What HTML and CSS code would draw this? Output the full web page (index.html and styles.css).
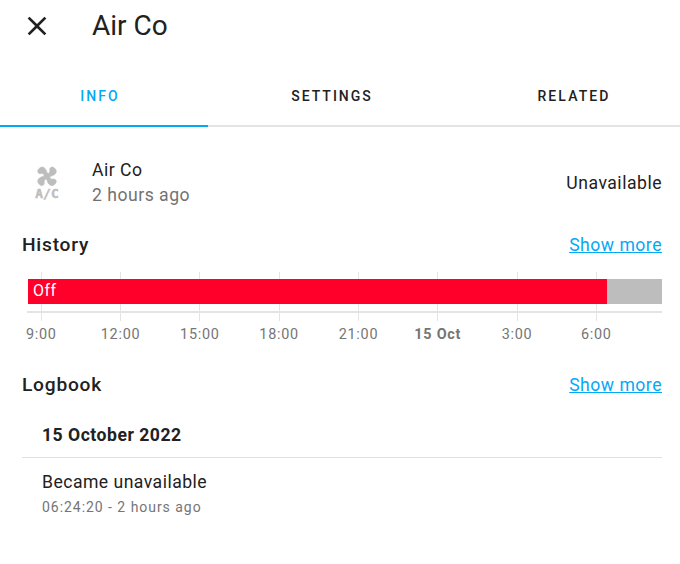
FILE: index.html
```html
<!DOCTYPE html>
<html lang="en">
<head>
	<meta charset="UTF-8">
	<title>Air Co</title>
	<link rel="stylesheet" href="styles.css">
</head>
<body>
	<header class="top-bar">
		<button class="close-btn" aria-label="Close">
			<svg viewBox="0 0 24 24" width="32" height="32"><path d="M19,6.41L17.59,5L12,10.59L6.41,5L5,6.41L10.59,12L5,17.59L6.41,19L12,13.41L17.59,19L19,17.59L13.41,12L19,6.41Z"/></svg>
		</button>
		<h1 class="title">Air Co</h1>
	</header>
	<nav class="tabs">
		<div class="tab tab-info">INFO</div>
		<div class="tab tab-settings">SETTINGS</div>
		<div class="tab tab-related">RELATED</div>
	</nav>
	<section class="entity">
		<div class="entity-icon">
			<svg viewBox="0 0 24 24" width="32" height="32"><path class="icon-fan" d="M6.59,0.66C8.93,-1.15 11.47,1.06 12.04,4.5C12.47,4.5 12.89,4.62 13.27,4.84C13.79,4.24 14.25,3.42 14.07,2.5C13.65,0.35 16.06,-1.39 18.35,1.58C20.16,3.92 17.95,6.46 14.5,7.03C14.5,7.46 14.39,7.89 14.16,8.27C14.76,8.78 15.58,9.24 16.5,9.06C18.63,8.64 20.38,11.04 17.41,13.34C15.07,15.15 12.53,12.94 11.96,9.5C11.53,9.5 11.11,9.37 10.74,9.15C10.22,9.75 9.75,10.58 9.93,11.5C10.35,13.64 7.94,15.39 5.65,12.42C3.83,10.07 6.05,7.53 9.5,6.97C9.5,6.54 9.63,6.12 9.85,5.74C9.25,5.23 8.43,4.76 7.5,4.94C5.37,5.36 3.62,2.96 6.59,0.66Z"/><text class="icon-text" x="12" y="23.2" text-anchor="middle">A/C</text></svg>
		</div>
		<div class="entity-info">
			<div class="entity-name">Air Co</div>
			<div class="entity-time">2 hours ago</div>
		</div>
		<div class="entity-state">Unavailable</div>
	</section>
	<section class="section-head history-head">
		<h2>History</h2>
		<a href="#">Show more</a>
	</section>
	<section class="chart">
		<div class="chart-ticks">
			<span></span><span></span><span></span><span></span><span></span><span></span><span></span><span></span>
		</div>
		<div class="chart-bar">
			<div class="bar-off">Off</div>
			<div class="bar-unavailable"></div>
		</div>
		<div class="chart-axis"></div>
		<div class="chart-labels">
			<span>9:00</span><span>12:00</span><span>15:00</span><span>18:00</span><span>21:00</span><span class="major">15 Oct</span><span>3:00</span><span>6:00</span>
		</div>
	</section>
	<section class="section-head logbook-head">
		<h2>Logbook</h2>
		<a href="#">Show more</a>
	</section>
	<section class="logbook">
		<div class="log-date">15 October 2022</div>
		<div class="log-entry">
			<div class="log-msg">Became unavailable</div>
			<div class="log-time">06:24:20 - 2 hours ago</div>
		</div>
	</section>
</body>
</html>
```

FILE: styles.css
```css
*{padding: 0;margin: 0;}
*,*:after,*:before{box-sizing:border-box;}
html,body{height: 100%;width: 100%;}
body{
	background: #fff;
	color: #212121;
	font-family: Roboto, "Liberation Sans", sans-serif;
	overflow: hidden;
}
.top-bar{
	display: flex;
	align-items: center;
	height: 52px;
	padding-left: 21px;
}
.close-btn{
	display: flex;
	width: 32px;
	height: 32px;
	border: 0;
	background: none;
	margin-right: 39px;
}
.close-btn svg{fill: #212121;}
.title{
	font-size: 28px;
	font-weight: 400;
	line-height: 32px;
}
.tabs{
	display: flex;
	height: 75px;
	border-bottom: 2px solid #e4e4e4;
}
.tab{
	display: flex;
	align-items: center;
	justify-content: center;
	height: 75px;
	font-size: 14px;
	font-weight: 500;
	letter-spacing: 2px;
	padding-top: 13px;
}
.tab-info{
	width: 208px;
	padding-right: 8px;
	padding-top: 15px;
	color: #03a9f4;
	border-bottom: 2px solid #03a9f4;
}
.tab-settings{width: 248px;}
.tab-related{width: 224px;padding-left: 12px;letter-spacing: 2.1px;}
.entity{
	display: flex;
	align-items: center;
	height: 62px;
	margin-top: 25px;
	padding: 0 18px 0 31px;
	font-size: 17.6px;
	letter-spacing: 0.5px;
}
.entity-icon{
	display: flex;
	width: 32px;
	height: 32px;
	margin-right: 29px;
}
.entity-icon svg{fill: #bdbdbd;overflow: visible;}
.icon-fan{
	stroke: #bdbdbd;
	stroke-width: 0.4;
}
.icon-text{
	font-family: "DejaVu Sans Mono", monospace;
	font-size: 9.6px;
	font-weight: 700;
	letter-spacing: 0.1px;
	stroke: #bdbdbd;
	stroke-width: 0.35;
}
.entity-info{flex: 1;}
.entity-name{line-height: 24px;}
.entity-time{
	line-height: 26px;
	color: #727272;
}
.section-head{
	display: flex;
	justify-content: space-between;
	align-items: center;
	padding: 0 18px 0 22px;
	height: 28px;
}
.section-head h2{
	font-size: 19.2px;
	font-weight: 500;
	letter-spacing: 0.75px;
}
.section-head a{
	font-size: 17.6px;
	letter-spacing: 0.5px;
	padding-top: 2px;
	color: #03a9f4;
}
.history-head{margin-top: 16px;}
.chart{
	position: relative;
	height: 90px;
	margin-top: 14px;
	padding: 7px 18px 0 28px;
}
.chart-bar{
	display: flex;
	height: 25px;
	position: relative;
}
.bar-off{
	width: 579px;
	background: #ff002b;
	color: #fff;
	font-size: 16px;
	letter-spacing: 0.5px;
	line-height: 24px;
	padding-left: 5px;
}
.bar-unavailable{
	flex: 1;
	background: #bdbdbd;
}
.chart-axis{
	height: 2px;
	margin: 7px 0 0 -1px;
	background: #e4e4e4;
}
/* gridlines run behind the bar */
.chart-ticks{
	position: absolute;
	top: 0;
	left: 1.6px;
	display: flex;
	height: 49px;
}
.chart-ticks span{
	width: 79.3px;
	background: linear-gradient(#e4e4e4,#e4e4e4) center/1px 100% no-repeat;
}
.chart-labels{
	display: flex;
	margin: 14px 0 0 -26.4px;
	font-size: 14.4px;
	letter-spacing: 0.75px;
	line-height: 16px;
	color: #757575;
}
.chart-labels span{
	width: 79.3px;
	text-align: center;
}
.chart-labels .major{font-weight: 700;}
.logbook-head{margin-top: 8px;}
.logbook{padding: 0 18px 0 22px;}
.log-date{
	height: 42px;
	margin-top: 18px;
	padding: 8px 0 0 20px;
	font-size: 17.6px;
	letter-spacing: 0.5px;
	font-weight: 700;
	line-height: 22px;
	border-bottom: 1px solid #e0e0e0;
}
.log-entry{padding: 12px 0 0 20px;}
.log-msg{
	font-size: 17.6px;
	letter-spacing: 0.47px;
	line-height: 24px;
}
.log-time{
	font-size: 14px;
	line-height: 26px;
	letter-spacing: 0.96px;
	color: #757575;
}
```
